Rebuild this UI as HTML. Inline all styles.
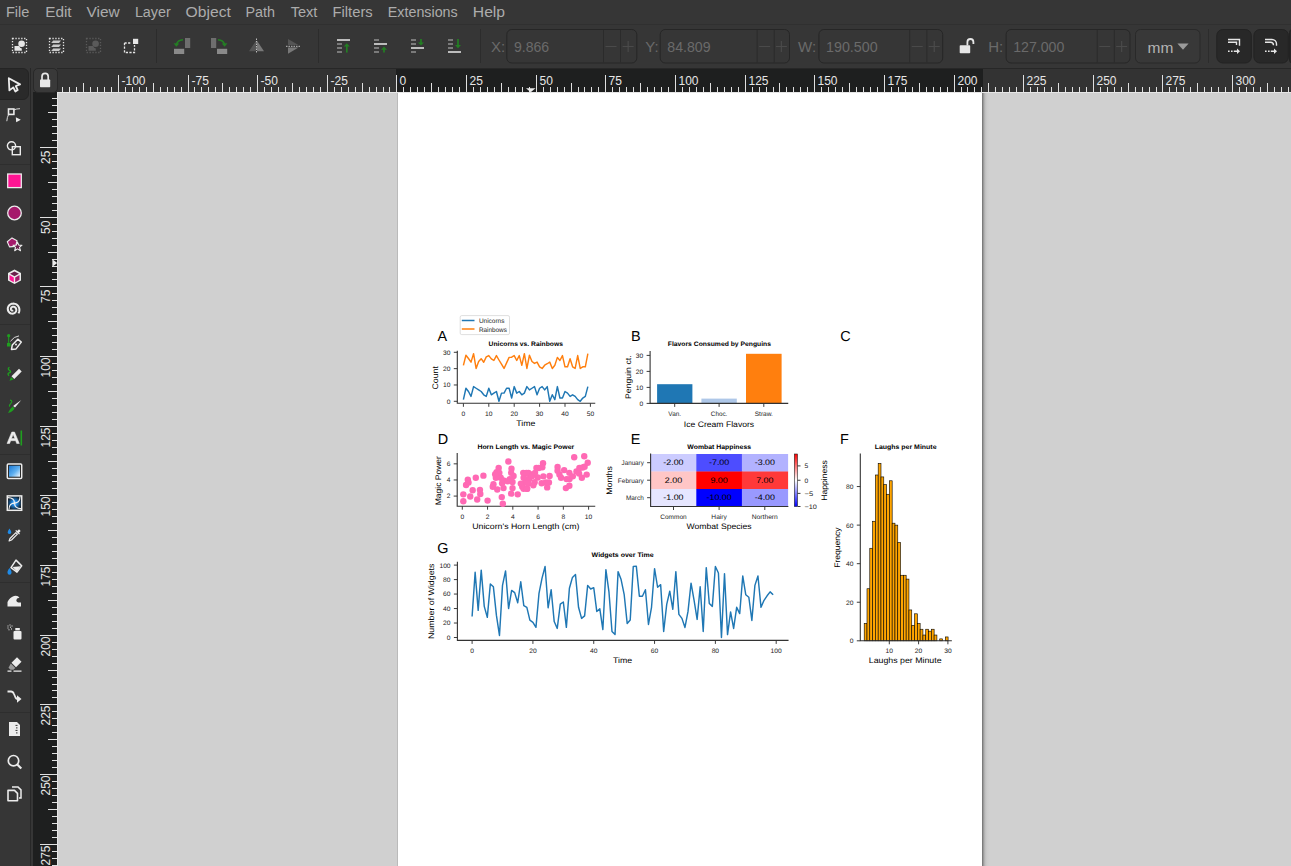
<!DOCTYPE html><html><head><meta charset="utf-8"><style>
*{margin:0;padding:0;box-sizing:border-box}
html,body{width:1291px;height:866px;overflow:hidden;background:#363636;font-family:"Liberation Sans",sans-serif;position:relative}
.a{position:absolute}
.menu{position:absolute;top:0;left:0;width:1291px;height:25px;background:#363636;border-bottom:1px solid #303030}
.mi{position:absolute;top:3px;font-size:15px;color:#bdbdbd;line-height:18px}
.tb{position:absolute;top:25px;left:0;width:1291px;height:43px;background:#363636}
.fld{position:absolute;top:29px;height:34px;border:1px solid #252525;border-radius:5px}
.fl{position:absolute;top:38px;font-size:15px;color:#6b6b6b;line-height:18px}
.sep{position:absolute;width:1px;background:#2e2e2e}
</style></head><body>
<div class="menu"></div>
<svg class="a" style="left:0;top:0" width="1291" height="24"><text x="5.9" y="16.9" font-family="Liberation Sans" font-size="15.3" fill="#acacac" textLength="23.5" lengthAdjust="spacingAndGlyphs">File</text><text x="45.2" y="16.9" font-family="Liberation Sans" font-size="15.3" fill="#acacac" textLength="26.4" lengthAdjust="spacingAndGlyphs">Edit</text><text x="86.5" y="16.9" font-family="Liberation Sans" font-size="15.3" fill="#acacac" textLength="33.2" lengthAdjust="spacingAndGlyphs">View</text><text x="134.9" y="16.9" font-family="Liberation Sans" font-size="15.3" fill="#acacac" textLength="35.9" lengthAdjust="spacingAndGlyphs">Layer</text><text x="185.6" y="16.9" font-family="Liberation Sans" font-size="15.3" fill="#acacac" textLength="45.3" lengthAdjust="spacingAndGlyphs">Object</text><text x="245.5" y="16.9" font-family="Liberation Sans" font-size="15.3" fill="#acacac" textLength="29.5" lengthAdjust="spacingAndGlyphs">Path</text><text x="290.7" y="16.9" font-family="Liberation Sans" font-size="15.3" fill="#acacac" textLength="26.7" lengthAdjust="spacingAndGlyphs">Text</text><text x="332.5" y="16.9" font-family="Liberation Sans" font-size="15.3" fill="#acacac" textLength="40.2" lengthAdjust="spacingAndGlyphs">Filters</text><text x="387.8" y="16.9" font-family="Liberation Sans" font-size="15.3" fill="#acacac" textLength="69.9" lengthAdjust="spacingAndGlyphs">Extensions</text><text x="472.8" y="16.9" font-family="Liberation Sans" font-size="15.3" fill="#acacac" textLength="32.3" lengthAdjust="spacingAndGlyphs">Help</text></svg>
<div class="tb"></div>
<svg class="a" style="left:0;top:0" width="1291" height="68"><rect x="12.5" y="38.5" width="14" height="14" fill="none" stroke="#e6e6e6" stroke-width="1.3" stroke-dasharray="1.3 1.6"/><circle cx="21.6" cy="43.8" r="3.3" fill="#e6e6e6"/><path d="M14.5 46H19.2A3.6 3.6 0 0 0 21.8 48.5V50.8H14.5Z" fill="#e6e6e6"/><rect x="49.5" y="38.5" width="14" height="14" fill="none" stroke="#e6e6e6" stroke-width="1.3" stroke-dasharray="1.3 1.6"/><path d="M53.2 40.6H61L59 43.0H51.2Z" fill="#c8c8c8"/><path d="M53.2 44.6H61L59 47.0H51.2Z" fill="#c8c8c8"/><path d="M53.2 48.6H61L59 51.0H51.2Z" fill="#c8c8c8"/><rect x="86.5" y="38.5" width="14" height="14" fill="none" stroke="#5a5a5a" stroke-width="1.3" stroke-dasharray="1.3 1.6"/><circle cx="95.6" cy="43.8" r="3.3" fill="#5a5a5a"/><path d="M88.5 46H93.2A3.6 3.6 0 0 0 95.8 48.5V50.8H88.5Z" fill="#5a5a5a"/><path d="M124.5 43V52.5H134.5V45" fill="none" stroke="#e6e6e6" stroke-width="1.3" stroke-dasharray="2.2 1.4"/><path d="M124.5 43H131" fill="none" stroke="#e6e6e6" stroke-width="1.3" stroke-dasharray="2.2 1.4"/><rect x="133" y="38.8" width="5.2" height="5.2" fill="#e6e6e6"/><path d="M156.5 29V63" stroke="#2c2c2c" stroke-width="1"/><path d="M318.5 29V63" stroke="#2c2c2c" stroke-width="1"/><path d="M480.5 29V63" stroke="#2c2c2c" stroke-width="1"/><path d="M1208.5 29V63" stroke="#2c2c2c" stroke-width="1"/><rect x="185" y="38" width="5.2" height="10" fill="#6e6e6e"/><rect x="174" y="48.8" width="10.2" height="5.2" fill="#8a8a8a"/><path d="M183 39.7C179 40 177 42 176.5 44.5" fill="none" stroke="#237f23" stroke-width="1.6"/><path d="M173.6 43.2L176.3 46.8L179.3 43.5Z" fill="#237f23"/><rect x="211" y="38" width="5.2" height="10" fill="#6e6e6e"/><rect x="217" y="48.8" width="10.2" height="5.2" fill="#8a8a8a"/><path d="M218 39.7C222 40 224 42 224.5 44.5" fill="none" stroke="#237f23" stroke-width="1.6"/><path d="M227.4 43.2L224.7 46.8L221.7 43.5Z" fill="#237f23"/><path d="M256 40.8V51.3H249Z" fill="#555"/><path d="M257 40.8V51.3H264Z" fill="#787878"/><path d="M256.5 38.5V53.2" stroke="#bdbdbd" stroke-width="1" stroke-dasharray="1.5 1"/><path d="M288 39V45L298.5 45Z" fill="#555"/><path d="M288 53.8V47.6L298.5 47.6Z" fill="#787878"/><path d="M286 46.3H300.5" stroke="#bdbdbd" stroke-width="1" stroke-dasharray="1.5 1"/><rect x="337" y="39" width="13" height="2" fill="#bcbcbc"/><rect x="337" y="43" width="5" height="2" fill="#7a7a7a"/><rect x="337" y="47" width="5" height="2" fill="#7a7a7a"/><rect x="337" y="51" width="5" height="2" fill="#7a7a7a"/><path d="M346.8 52.6V45.7" stroke="#237f23" stroke-width="1.7"/><path d="M343.8 46.400000000000006L346.8 43.2L349.8 46.400000000000006Z" fill="#237f23"/><rect x="374" y="39" width="5" height="2" fill="#7a7a7a"/><rect x="374" y="43" width="13" height="2" fill="#bcbcbc"/><rect x="374" y="47" width="5" height="2" fill="#7a7a7a"/><rect x="374" y="51" width="5" height="2" fill="#7a7a7a"/><path d="M384 52.6V49.0" stroke="#237f23" stroke-width="1.7"/><path d="M381 49.7L384 46.5L387 49.7Z" fill="#237f23"/><rect x="411" y="39" width="5" height="2" fill="#7a7a7a"/><rect x="411" y="43" width="5" height="2" fill="#7a7a7a"/><rect x="411" y="47" width="13" height="2" fill="#bcbcbc"/><rect x="411" y="51" width="5" height="2" fill="#7a7a7a"/><path d="M421 39V43.1" stroke="#237f23" stroke-width="1.7"/><path d="M418 42.4L421 45.6L424 42.4Z" fill="#237f23"/><rect x="448" y="39" width="5" height="2" fill="#7a7a7a"/><rect x="448" y="43" width="5" height="2" fill="#7a7a7a"/><rect x="448" y="47" width="5" height="2" fill="#7a7a7a"/><rect x="448" y="51" width="13" height="2" fill="#bcbcbc"/><path d="M458 39V45.7" stroke="#237f23" stroke-width="1.7"/><path d="M455 45.0L458 48.2L461 45.0Z" fill="#237f23"/><rect x="506.8" y="29.5" width="129.99999999999994" height="33.5" rx="5" fill="#363636" stroke="#262626" stroke-width="1"/><path d="M603.5 30V62.5M620.5 30V62.5" stroke="#2b2b2b" stroke-width="1"/><path d="M605.5 46.5H616.5M622.65 46.5H633.65M628.15 41V52" stroke="#4a4a4a" stroke-width="1.2"/><text x="491" y="52" font-family="Liberation Sans" font-size="15" fill="#6a6a6a">X:</text><text x="513.9" y="52" font-family="Liberation Sans" font-size="15" fill="#6a6a6a" textLength="35.300000000000004" lengthAdjust="spacingAndGlyphs">9.866</text><rect x="660.2" y="29.5" width="129.29999999999995" height="33.5" rx="5" fill="#363636" stroke="#262626" stroke-width="1"/><path d="M757.1 30V62.5M774.2 30V62.5" stroke="#2b2b2b" stroke-width="1"/><path d="M759.1500000000001 46.5H770.1500000000001M775.85 46.5H786.85M781.35 41V52" stroke="#4a4a4a" stroke-width="1.2"/><text x="645.3" y="52" font-family="Liberation Sans" font-size="15" fill="#6a6a6a">Y:</text><text x="667.3000000000001" y="52" font-family="Liberation Sans" font-size="15" fill="#6a6a6a" textLength="43.300000000000004" lengthAdjust="spacingAndGlyphs">84.809</text><rect x="818.9" y="29.5" width="123.80000000000007" height="33.5" rx="5" fill="#363636" stroke="#262626" stroke-width="1"/><path d="M909.7 30V62.5M926.8 30V62.5" stroke="#2b2b2b" stroke-width="1"/><path d="M911.75 46.5H922.75M928.75 46.5H939.75M934.25 41V52" stroke="#4a4a4a" stroke-width="1.2"/><text x="798" y="52" font-family="Liberation Sans" font-size="15" fill="#6a6a6a">W:</text><text x="826.0" y="52" font-family="Liberation Sans" font-size="15" fill="#6a6a6a" textLength="51.7" lengthAdjust="spacingAndGlyphs">190.500</text><rect x="1006.1" y="29.5" width="123.89999999999998" height="33.5" rx="5" fill="#363636" stroke="#262626" stroke-width="1"/><path d="M1097.2 30V62.5M1114.3 30V62.5" stroke="#2b2b2b" stroke-width="1"/><path d="M1099.25 46.5H1110.25M1116.15 46.5H1127.15M1121.65 41V52" stroke="#4a4a4a" stroke-width="1.2"/><text x="988.2" y="52" font-family="Liberation Sans" font-size="15" fill="#6a6a6a">H:</text><text x="1013.2" y="52" font-family="Liberation Sans" font-size="15" fill="#6a6a6a" textLength="51.2" lengthAdjust="spacingAndGlyphs">127.000</text><rect x="959.7" y="45.3" width="10.5" height="8" rx="0.8" fill="#e6e6e6"/><path d="M967.4 45.5V42A3 3 0 0 1 973.4 42V44" fill="none" stroke="#e6e6e6" stroke-width="1.8"/><rect x="1135.5" y="29.5" width="64.5" height="33.5" rx="5" fill="#383838" stroke="#292929" stroke-width="1"/><text x="1147.5" y="52.8" font-family="Liberation Sans" font-size="15.5" fill="#b4b4b4">mm</text><path d="M1177.4 43.5H1188.6L1183 49.7Z" fill="#9a9a9a"/><rect x="1216.8" y="29.5" width="34.5" height="33.5" rx="6" fill="#282828" stroke="#222" stroke-width="1"/><rect x="1253.9" y="29.5" width="34.5" height="33.5" rx="6" fill="#282828" stroke="#222" stroke-width="1"/><path d="M1228 39.5H1239.5V45.8M1228 42.3H1236.5V45" fill="none" stroke="#e6e6e6" stroke-width="1.4"/><path d="M1228 51.2H1229.6M1231 51.2H1232.6M1233.8 51.2H1237.5" stroke="#e6e6e6" stroke-width="1.6"/><path d="M1237 48.4L1240 51.2L1237 54Z" fill="#e6e6e6"/><path d="M1265 39.5H1272A4.5 4.5 0 0 1 1276.5 44V45.8M1265 42.3H1270.5A3 3 0 0 1 1273.5 45.3" fill="none" stroke="#e6e6e6" stroke-width="1.4"/><path d="M1265 51.2H1266.6M1268 51.2H1269.6M1270.8 51.2H1274.5" stroke="#e6e6e6" stroke-width="1.6"/><path d="M1274 48.4L1277 51.2L1274 54Z" fill="#e6e6e6"/><rect x="1289.5" y="29.5" width="6" height="33.5" rx="3" fill="#282828" stroke="#222"/></svg>
<div class="a" style="left:58px;top:93px;width:1233px;height:773px;background:#d0d0d0"></div>
<div class="a" style="left:398px;top:93px;width:584px;height:773px;background:#fff"></div>
<div class="a" style="left:397px;top:93px;width:1px;height:773px;background:#bababa"></div>
<div class="a" style="left:982px;top:93px;width:8px;height:773px;background:linear-gradient(90deg,#6c6c6c 0px,#9a9a9a 1.5px,#bdbdbd 3px,#cbcbcb 5px,#d0d0d0 8px)"></div>
<svg class="a" style="left:0;top:0" width="1291" height="866"><text x="442.3" y="337.3" font-family="Liberation Sans" text-rendering="geometricPrecision" font-size="14.42" text-anchor="middle" dominant-baseline="central" fill="#000">A</text><rect x="460.2" y="315.6" width="49.3" height="19" rx="1.5" fill="#fff" stroke="#d6d6d6" stroke-width="0.8"/><path d="M461.8 320.5H474.5" stroke="#1f77b4" stroke-width="1.5"/><path d="M461.8 329H474.5" stroke="#ff7f0e" stroke-width="1.5"/><text x="478.9" y="321.5" font-family="Liberation Sans" text-rendering="geometricPrecision" font-size="6.45" text-anchor="start" dominant-baseline="central" fill="#222" textLength="25.51" lengthAdjust="spacingAndGlyphs">Unicorns</text><text x="478.9" y="330" font-family="Liberation Sans" text-rendering="geometricPrecision" font-size="6.45" text-anchor="start" dominant-baseline="central" fill="#222" textLength="28.03" lengthAdjust="spacingAndGlyphs">Rainbows</text><text x="525.8" y="344.4" font-family="Liberation Sans" text-rendering="geometricPrecision" font-size="6.45" text-anchor="middle" dominant-baseline="central" font-weight="bold" fill="#000" textLength="74.37" lengthAdjust="spacingAndGlyphs">Unicorns vs. Rainbows</text><path d="M457.3 351.2V403.3H594.7" fill="none" stroke="#333" stroke-width="1.1" stroke-linecap="square"/><path d="M453.8 401.3H457.3 M453.8 384.97H457.3 M453.8 368.64H457.3 M453.8 352.31H457.3" stroke="#333" stroke-width="0.95"/><text x="450.5" y="402.2" font-family="Liberation Sans" text-rendering="geometricPrecision" font-size="6.45" text-anchor="end" dominant-baseline="central" fill="#222" textLength="3.73" lengthAdjust="spacingAndGlyphs">0</text><text x="450.5" y="385.87" font-family="Liberation Sans" text-rendering="geometricPrecision" font-size="6.45" text-anchor="end" dominant-baseline="central" fill="#222" textLength="7.46" lengthAdjust="spacingAndGlyphs">10</text><text x="450.5" y="369.54" font-family="Liberation Sans" text-rendering="geometricPrecision" font-size="6.45" text-anchor="end" dominant-baseline="central" fill="#222" textLength="7.46" lengthAdjust="spacingAndGlyphs">20</text><text x="450.5" y="353.21" font-family="Liberation Sans" text-rendering="geometricPrecision" font-size="6.45" text-anchor="end" dominant-baseline="central" fill="#222" textLength="7.46" lengthAdjust="spacingAndGlyphs">30</text><path d="M463.4 403.3V406.8 M488.8 403.3V406.8 M514.2 403.3V406.8 M539.6 403.3V406.8 M565 403.3V406.8 M590.4 403.3V406.8" stroke="#333" stroke-width="0.95"/><text x="463.4" y="414.6" font-family="Liberation Sans" text-rendering="geometricPrecision" font-size="6.45" text-anchor="middle" dominant-baseline="central" fill="#222" textLength="3.73" lengthAdjust="spacingAndGlyphs">0</text><text x="488.8" y="414.6" font-family="Liberation Sans" text-rendering="geometricPrecision" font-size="6.45" text-anchor="middle" dominant-baseline="central" fill="#222" textLength="7.46" lengthAdjust="spacingAndGlyphs">10</text><text x="514.2" y="414.6" font-family="Liberation Sans" text-rendering="geometricPrecision" font-size="6.45" text-anchor="middle" dominant-baseline="central" fill="#222" textLength="7.46" lengthAdjust="spacingAndGlyphs">20</text><text x="539.6" y="414.6" font-family="Liberation Sans" text-rendering="geometricPrecision" font-size="6.45" text-anchor="middle" dominant-baseline="central" fill="#222" textLength="7.46" lengthAdjust="spacingAndGlyphs">30</text><text x="565" y="414.6" font-family="Liberation Sans" text-rendering="geometricPrecision" font-size="6.45" text-anchor="middle" dominant-baseline="central" fill="#222" textLength="7.46" lengthAdjust="spacingAndGlyphs">40</text><text x="590.4" y="414.6" font-family="Liberation Sans" text-rendering="geometricPrecision" font-size="6.45" text-anchor="middle" dominant-baseline="central" fill="#222" textLength="7.46" lengthAdjust="spacingAndGlyphs">50</text><text x="525.8" y="423.9" font-family="Liberation Sans" text-rendering="geometricPrecision" font-size="8.05" text-anchor="middle" dominant-baseline="central" fill="#000" textLength="19.14" lengthAdjust="spacingAndGlyphs">Time</text><text x="435.1" y="377.8" font-family="Liberation Sans" text-rendering="geometricPrecision" font-size="8.05" text-anchor="middle" dominant-baseline="central" fill="#000" transform="rotate(-90 435.1 377.8)" textLength="23.22" lengthAdjust="spacingAndGlyphs">Count</text><polyline points="463.4,399.67 465.94,388.24 468.48,391.5 471.02,396.4 473.56,386.6 476.1,388.24 478.64,389.87 481.18,391.5 483.72,394.77 486.26,396.4 488.8,388.24 491.34,394.77 493.88,393.13 496.42,391.5 498.96,401.3 501.5,393.13 504.04,393.13 506.58,388.24 509.12,388.24 511.66,398.03 514.2,386.6 516.74,393.13 519.28,391.5 521.82,394.77 524.36,393.13 526.9,386.6 529.44,389.87 531.98,388.24 534.52,386.6 537.06,394.77 539.6,388.24 542.14,386.6 544.68,389.87 547.22,386.6 549.76,401.3 552.3,394.77 554.84,399.67 557.38,386.6 559.92,398.03 562.46,398.03 565,391.5 567.54,393.13 570.08,396.4 572.62,394.77 575.16,396.4 577.7,399.67 580.24,401.3 582.78,398.03 585.32,396.4 587.86,386.6" fill="none" stroke="#1f77b4" stroke-width="1.45" stroke-linejoin="round"/><polyline points="463.4,365.37 465.94,355.25 468.48,358.52 471.02,362.11 473.56,353.62 476.1,368.48 478.64,361.45 481.18,358.68 483.72,362.27 486.26,356.88 488.8,355.58 491.34,358.84 493.88,360.48 496.42,355.58 498.96,359.99 501.5,364.23 504.04,368.48 506.58,362.92 509.12,357.37 511.66,357.21 514.2,355.58 516.74,360.48 519.28,355.58 521.82,365.37 524.36,353.62 526.9,368.48 529.44,355.25 531.98,361.45 534.52,363.41 537.06,362.11 539.6,366.84 542.14,368.48 544.68,365.21 547.22,363.74 549.76,362.11 552.3,368.48 554.84,365.21 557.38,357.37 559.92,360.48 562.46,355.58 565,366.84 567.54,366.84 570.08,358.68 572.62,366.84 575.16,368.48 577.7,355.58 580.24,368.48 582.78,366.84 585.32,366.84 587.86,353.62" fill="none" stroke="#ff7f0e" stroke-width="1.45" stroke-linejoin="round"/><text x="635.7" y="337" font-family="Liberation Sans" text-rendering="geometricPrecision" font-size="14.42" text-anchor="middle" dominant-baseline="central" fill="#000">B</text><text x="845.4" y="337" font-family="Liberation Sans" text-rendering="geometricPrecision" font-size="14.42" text-anchor="middle" dominant-baseline="central" fill="#000">C</text><text x="719.4" y="344.5" font-family="Liberation Sans" text-rendering="geometricPrecision" font-size="6.45" text-anchor="middle" dominant-baseline="central" font-weight="bold" fill="#000" textLength="103.24" lengthAdjust="spacingAndGlyphs">Flavors Consumed by Penguins</text><rect x="657.1" y="384.2" width="35.3" height="19.2" fill="#1f77b4"/><rect x="701.4" y="398.6" width="35.4" height="4.8" fill="#aec7e8"/><rect x="746" y="353.8" width="35.6" height="49.6" fill="#ff7f0e"/><path d="M650.1 351.6V403.4H787.7" fill="none" stroke="#333" stroke-width="1.1" stroke-linecap="square"/><path d="M646.6 403.4H650.1 M646.6 387.4H650.1 M646.6 371.4H650.1 M646.6 355.4H650.1" stroke="#333" stroke-width="0.95"/><text x="643.3" y="404.3" font-family="Liberation Sans" text-rendering="geometricPrecision" font-size="6.45" text-anchor="end" dominant-baseline="central" fill="#222" textLength="3.73" lengthAdjust="spacingAndGlyphs">0</text><text x="643.3" y="388.3" font-family="Liberation Sans" text-rendering="geometricPrecision" font-size="6.45" text-anchor="end" dominant-baseline="central" fill="#222" textLength="7.46" lengthAdjust="spacingAndGlyphs">10</text><text x="643.3" y="372.3" font-family="Liberation Sans" text-rendering="geometricPrecision" font-size="6.45" text-anchor="end" dominant-baseline="central" fill="#222" textLength="7.46" lengthAdjust="spacingAndGlyphs">20</text><text x="643.3" y="356.3" font-family="Liberation Sans" text-rendering="geometricPrecision" font-size="6.45" text-anchor="end" dominant-baseline="central" fill="#222" textLength="7.46" lengthAdjust="spacingAndGlyphs">30</text><path d="M674.7 403.4V406.9 M719.1 403.4V406.9 M763.8 403.4V406.9" stroke="#333" stroke-width="0.95"/><text x="674.7" y="414.9" font-family="Liberation Sans" text-rendering="geometricPrecision" font-size="6.45" text-anchor="middle" dominant-baseline="central" fill="#222" textLength="12.72" lengthAdjust="spacingAndGlyphs">Van.</text><text x="719.1" y="414.9" font-family="Liberation Sans" text-rendering="geometricPrecision" font-size="6.45" text-anchor="middle" dominant-baseline="central" fill="#222" textLength="16.48" lengthAdjust="spacingAndGlyphs">Choc.</text><text x="763.8" y="414.9" font-family="Liberation Sans" text-rendering="geometricPrecision" font-size="6.45" text-anchor="middle" dominant-baseline="central" fill="#222" textLength="18.14" lengthAdjust="spacingAndGlyphs">Straw.</text><text x="719" y="424.1" font-family="Liberation Sans" text-rendering="geometricPrecision" font-size="8.05" text-anchor="middle" dominant-baseline="central" fill="#000" textLength="70.28" lengthAdjust="spacingAndGlyphs">Ice Cream Flavors</text><text x="628.7" y="377.2" font-family="Liberation Sans" text-rendering="geometricPrecision" font-size="8.05" text-anchor="middle" dominant-baseline="central" fill="#000" transform="rotate(-90 628.7 377.2)" textLength="43.59" lengthAdjust="spacingAndGlyphs">Penguin ct.</text><text x="442.9" y="440.1" font-family="Liberation Sans" text-rendering="geometricPrecision" font-size="14.42" text-anchor="middle" dominant-baseline="central" fill="#000">D</text><text x="525.8" y="447.2" font-family="Liberation Sans" text-rendering="geometricPrecision" font-size="6.45" text-anchor="middle" dominant-baseline="central" font-weight="bold" fill="#000" textLength="96.80" lengthAdjust="spacingAndGlyphs">Horn Length vs. Magic Power</text><path d="M457.2 453.6V506.2H594.7" fill="none" stroke="#333" stroke-width="1.1" stroke-linecap="square"/><path d="M453.7 496.08H457.2 M453.7 479.96H457.2 M453.7 463.84H457.2" stroke="#333" stroke-width="0.95"/><text x="450.4" y="496.98" font-family="Liberation Sans" text-rendering="geometricPrecision" font-size="6.45" text-anchor="end" dominant-baseline="central" fill="#222" textLength="3.73" lengthAdjust="spacingAndGlyphs">2</text><text x="450.4" y="480.86" font-family="Liberation Sans" text-rendering="geometricPrecision" font-size="6.45" text-anchor="end" dominant-baseline="central" fill="#222" textLength="3.73" lengthAdjust="spacingAndGlyphs">4</text><text x="450.4" y="464.74" font-family="Liberation Sans" text-rendering="geometricPrecision" font-size="6.45" text-anchor="end" dominant-baseline="central" fill="#222" textLength="3.73" lengthAdjust="spacingAndGlyphs">6</text><path d="M462.3 506.2V509.7 M487.56 506.2V509.7 M512.82 506.2V509.7 M538.08 506.2V509.7 M563.34 506.2V509.7 M588.6 506.2V509.7" stroke="#333" stroke-width="0.95"/><text x="462.3" y="517.1" font-family="Liberation Sans" text-rendering="geometricPrecision" font-size="6.45" text-anchor="middle" dominant-baseline="central" fill="#222" textLength="3.73" lengthAdjust="spacingAndGlyphs">0</text><text x="487.56" y="517.1" font-family="Liberation Sans" text-rendering="geometricPrecision" font-size="6.45" text-anchor="middle" dominant-baseline="central" fill="#222" textLength="3.73" lengthAdjust="spacingAndGlyphs">2</text><text x="512.82" y="517.1" font-family="Liberation Sans" text-rendering="geometricPrecision" font-size="6.45" text-anchor="middle" dominant-baseline="central" fill="#222" textLength="3.73" lengthAdjust="spacingAndGlyphs">4</text><text x="538.08" y="517.1" font-family="Liberation Sans" text-rendering="geometricPrecision" font-size="6.45" text-anchor="middle" dominant-baseline="central" fill="#222" textLength="3.73" lengthAdjust="spacingAndGlyphs">6</text><text x="563.34" y="517.1" font-family="Liberation Sans" text-rendering="geometricPrecision" font-size="6.45" text-anchor="middle" dominant-baseline="central" fill="#222" textLength="3.73" lengthAdjust="spacingAndGlyphs">8</text><text x="588.6" y="517.1" font-family="Liberation Sans" text-rendering="geometricPrecision" font-size="6.45" text-anchor="middle" dominant-baseline="central" fill="#222" textLength="7.46" lengthAdjust="spacingAndGlyphs">10</text><text x="525.8" y="526" font-family="Liberation Sans" text-rendering="geometricPrecision" font-size="8.05" text-anchor="middle" dominant-baseline="central" fill="#000" textLength="107.35" lengthAdjust="spacingAndGlyphs">Unicorn's Horn Length (cm)</text><text x="438.7" y="480.7" font-family="Liberation Sans" text-rendering="geometricPrecision" font-size="8.05" text-anchor="middle" dominant-baseline="central" fill="#000" transform="rotate(-90 438.7 480.7)" textLength="49.11" lengthAdjust="spacingAndGlyphs">Magic Power</text><g fill="#ff69b4"><circle cx="528.44" cy="479.12" r="3.2"/><circle cx="531.54" cy="474.48" r="3.2"/><circle cx="534.64" cy="482.22" r="3.2"/><circle cx="537.74" cy="477.57" r="3.2"/><circle cx="525.34" cy="482.22" r="3.2"/><circle cx="522.25" cy="486.87" r="3.2"/><circle cx="528.44" cy="472.93" r="3.2"/><circle cx="559.43" cy="474.48" r="3.2"/><circle cx="569.5" cy="479.12" r="3.2"/><circle cx="576.47" cy="471.38" r="3.2"/><circle cx="582.66" cy="467.5" r="3.2"/><circle cx="463.32" cy="494.35" r="3.2"/><circle cx="463.32" cy="501.28" r="3.2"/><circle cx="466.09" cy="485" r="3.2"/><circle cx="467.82" cy="479.8" r="3.2"/><circle cx="468.51" cy="482.57" r="3.2"/><circle cx="470.25" cy="496.43" r="3.2"/><circle cx="472.67" cy="490.19" r="3.2"/><circle cx="475.79" cy="477.72" r="3.2"/><circle cx="477.18" cy="499.55" r="3.2"/><circle cx="479.95" cy="489.85" r="3.2"/><circle cx="480.29" cy="494.01" r="3.2"/><circle cx="483.41" cy="475.64" r="3.2"/><circle cx="487.57" cy="500.59" r="3.2"/><circle cx="493.46" cy="484.3" r="3.2"/><circle cx="492.77" cy="486.73" r="3.2"/><circle cx="497.27" cy="489.5" r="3.2"/><circle cx="496.58" cy="472.18" r="3.2"/><circle cx="498.66" cy="468.02" r="3.2"/><circle cx="497.97" cy="476.33" r="3.2"/><circle cx="500.74" cy="477.72" r="3.2"/><circle cx="502.12" cy="483.26" r="3.2"/><circle cx="503.51" cy="488.12" r="3.2"/><circle cx="501.78" cy="497.12" r="3.2"/><circle cx="502.82" cy="503.71" r="3.2"/><circle cx="508.36" cy="461.43" r="3.2"/><circle cx="511.48" cy="468.71" r="3.2"/><circle cx="511.13" cy="472.87" r="3.2"/><circle cx="513.56" cy="475.99" r="3.2"/><circle cx="512.52" cy="481.88" r="3.2"/><circle cx="512.52" cy="488.12" r="3.2"/><circle cx="511.13" cy="493.66" r="3.2"/><circle cx="517.72" cy="494.35" r="3.2"/><circle cx="523.26" cy="472.87" r="3.2"/><circle cx="527.07" cy="473.56" r="3.2"/><circle cx="523.61" cy="477.72" r="3.2"/><circle cx="520.84" cy="483.61" r="3.2"/><circle cx="523.61" cy="488.81" r="3.2"/><circle cx="527.07" cy="488.81" r="3.2"/><circle cx="528.46" cy="483.26" r="3.2"/><circle cx="495.89" cy="477.72" r="3.2"/><circle cx="499.35" cy="472.87" r="3.2"/><circle cx="503.51" cy="480.49" r="3.2"/><circle cx="509.75" cy="479.11" r="3.2"/><circle cx="507.67" cy="481.19" r="3.2"/><circle cx="495.19" cy="474.26" r="3.2"/><circle cx="526.39" cy="472.87" r="3.2"/><circle cx="527.08" cy="488.81" r="3.2"/><circle cx="533.32" cy="485.34" r="3.2"/><circle cx="535.05" cy="472.87" r="3.2"/><circle cx="536.43" cy="468.02" r="3.2"/><circle cx="543.02" cy="463.17" r="3.2"/><circle cx="542.33" cy="467.33" r="3.2"/><circle cx="543.36" cy="476.33" r="3.2"/><circle cx="549.6" cy="475.99" r="3.2"/><circle cx="548.91" cy="482.57" r="3.2"/><circle cx="547.18" cy="487.42" r="3.2"/><circle cx="541.63" cy="483.26" r="3.2"/><circle cx="557.57" cy="466.98" r="3.2"/><circle cx="557.57" cy="470.79" r="3.2"/><circle cx="564.15" cy="470.1" r="3.2"/><circle cx="569.35" cy="472.87" r="3.2"/><circle cx="572.82" cy="476.33" r="3.2"/><circle cx="561.04" cy="477.72" r="3.2"/><circle cx="566.58" cy="479.11" r="3.2"/><circle cx="565.89" cy="488.12" r="3.2"/><circle cx="569.35" cy="485.69" r="3.2"/><circle cx="574.2" cy="457.28" r="3.2"/><circle cx="584.25" cy="456.24" r="3.2"/><circle cx="587.72" cy="462.82" r="3.2"/><circle cx="584.6" cy="466.63" r="3.2"/><circle cx="579.4" cy="468.02" r="3.2"/><circle cx="579.05" cy="473.56" r="3.2"/><circle cx="581.83" cy="477.72" r="3.2"/><circle cx="586.68" cy="474.6" r="3.2"/><circle cx="529.16" cy="479.11" r="3.2"/><circle cx="531.93" cy="476.33" r="3.2"/><circle cx="527.77" cy="483.26" r="3.2"/><circle cx="538.86" cy="468.02" r="3.2"/><circle cx="545.79" cy="482.57" r="3.2"/></g><text x="635.5" y="440.2" font-family="Liberation Sans" text-rendering="geometricPrecision" font-size="14.42" text-anchor="middle" dominant-baseline="central" fill="#000">E</text><text x="719.2" y="447.1" font-family="Liberation Sans" text-rendering="geometricPrecision" font-size="6.45" text-anchor="middle" dominant-baseline="central" font-weight="bold" fill="#000" textLength="63.76" lengthAdjust="spacingAndGlyphs">Wombat Happiness</text><rect x="650.6" y="454" width="46" height="17.8" fill="rgb(204,204,255)"/><text x="673.45" y="462.65" font-family="Liberation Sans" text-rendering="geometricPrecision" font-size="8.05" text-anchor="middle" dominant-baseline="central" fill="#000" textLength="20.23" lengthAdjust="spacingAndGlyphs">-2.00</text><rect x="696.3" y="454" width="45.9" height="17.8" fill="rgb(77,77,255)"/><text x="719.1" y="462.65" font-family="Liberation Sans" text-rendering="geometricPrecision" font-size="8.05" text-anchor="middle" dominant-baseline="central" fill="#000" textLength="20.23" lengthAdjust="spacingAndGlyphs">-7.00</text><rect x="741.9" y="454" width="46.2" height="17.8" fill="rgb(178,178,255)"/><text x="764.85" y="462.65" font-family="Liberation Sans" text-rendering="geometricPrecision" font-size="8.05" text-anchor="middle" dominant-baseline="central" fill="#000" textLength="20.23" lengthAdjust="spacingAndGlyphs">-3.00</text><rect x="650.6" y="471.5" width="46" height="17.8" fill="rgb(255,198,198)"/><text x="673.45" y="480.15" font-family="Liberation Sans" text-rendering="geometricPrecision" font-size="8.05" text-anchor="middle" dominant-baseline="central" fill="#000" textLength="17.41" lengthAdjust="spacingAndGlyphs">2.00</text><rect x="696.3" y="471.5" width="45.9" height="17.8" fill="rgb(255,0,0)"/><text x="719.1" y="480.15" font-family="Liberation Sans" text-rendering="geometricPrecision" font-size="8.05" text-anchor="middle" dominant-baseline="central" fill="#000" textLength="17.41" lengthAdjust="spacingAndGlyphs">9.00</text><rect x="741.9" y="471.5" width="46.2" height="17.8" fill="rgb(255,57,57)"/><text x="764.85" y="480.15" font-family="Liberation Sans" text-rendering="geometricPrecision" font-size="8.05" text-anchor="middle" dominant-baseline="central" fill="#000" textLength="17.41" lengthAdjust="spacingAndGlyphs">7.00</text><rect x="650.6" y="489" width="46" height="17.8" fill="rgb(230,230,255)"/><text x="673.45" y="497.65" font-family="Liberation Sans" text-rendering="geometricPrecision" font-size="8.05" text-anchor="middle" dominant-baseline="central" fill="#000" textLength="20.23" lengthAdjust="spacingAndGlyphs">-1.00</text><rect x="696.3" y="489" width="45.9" height="17.8" fill="rgb(0,0,255)"/><text x="719.1" y="497.65" font-family="Liberation Sans" text-rendering="geometricPrecision" font-size="8.05" text-anchor="middle" dominant-baseline="central" fill="#000" textLength="25.21" lengthAdjust="spacingAndGlyphs">-10.00</text><rect x="741.9" y="489" width="46.2" height="17.8" fill="rgb(153,153,255)"/><text x="764.85" y="497.65" font-family="Liberation Sans" text-rendering="geometricPrecision" font-size="8.05" text-anchor="middle" dominant-baseline="central" fill="#000" textLength="20.23" lengthAdjust="spacingAndGlyphs">-4.00</text><path d="M650.6 454V506.5H787.8" fill="none" stroke="#333" stroke-width="1.1" stroke-linecap="square"/><path d="M647.1 462.7H650.6 M647.1 480.2H650.6 M647.1 497.7H650.6" stroke="#333" stroke-width="0.95"/><text x="643.8" y="463.6" font-family="Liberation Sans" text-rendering="geometricPrecision" font-size="6.45" text-anchor="end" dominant-baseline="central" fill="#222" textLength="22.22" lengthAdjust="spacingAndGlyphs">January</text><text x="643.8" y="481.1" font-family="Liberation Sans" text-rendering="geometricPrecision" font-size="6.45" text-anchor="end" dominant-baseline="central" fill="#222" textLength="25.97" lengthAdjust="spacingAndGlyphs">February</text><text x="643.8" y="498.6" font-family="Liberation Sans" text-rendering="geometricPrecision" font-size="6.45" text-anchor="end" dominant-baseline="central" fill="#222" textLength="17.86" lengthAdjust="spacingAndGlyphs">March</text><path d="M673.5 506.5V510 M719.1 506.5V510 M764.8 506.5V510" stroke="#333" stroke-width="0.95"/><text x="673.5" y="517" font-family="Liberation Sans" text-rendering="geometricPrecision" font-size="6.45" text-anchor="middle" dominant-baseline="central" fill="#222" textLength="26.39" lengthAdjust="spacingAndGlyphs">Common</text><text x="719.1" y="517" font-family="Liberation Sans" text-rendering="geometricPrecision" font-size="6.45" text-anchor="middle" dominant-baseline="central" fill="#222" textLength="15.50" lengthAdjust="spacingAndGlyphs">Hairy</text><text x="764.8" y="517" font-family="Liberation Sans" text-rendering="geometricPrecision" font-size="6.45" text-anchor="middle" dominant-baseline="central" fill="#222" textLength="26.02" lengthAdjust="spacingAndGlyphs">Northern</text><text x="719.1" y="526.4" font-family="Liberation Sans" text-rendering="geometricPrecision" font-size="8.05" text-anchor="middle" dominant-baseline="central" fill="#000" textLength="65.08" lengthAdjust="spacingAndGlyphs">Wombat Species</text><text x="609.7" y="480.4" font-family="Liberation Sans" text-rendering="geometricPrecision" font-size="8.05" text-anchor="middle" dominant-baseline="central" fill="#000" transform="rotate(-90 609.7 480.4)" textLength="28.59" lengthAdjust="spacingAndGlyphs">Months</text><defs><linearGradient id="cb" x1="0" y1="1" x2="0" y2="0"><stop offset="0" stop-color="#0000ff"/><stop offset="0.5" stop-color="#ffffff"/><stop offset="1" stop-color="#ff0000"/></linearGradient></defs><rect x="794.3" y="454" width="3.2" height="52.5" fill="url(#cb)" stroke="#222" stroke-width="0.6"/><text x="804.5" y="466.8" font-family="Liberation Sans" text-rendering="geometricPrecision" font-size="6.45" text-anchor="start" dominant-baseline="central" fill="#222" textLength="3.73" lengthAdjust="spacingAndGlyphs">5</text><text x="804.5" y="481.15" font-family="Liberation Sans" text-rendering="geometricPrecision" font-size="6.45" text-anchor="start" dominant-baseline="central" fill="#222" textLength="3.73" lengthAdjust="spacingAndGlyphs">0</text><text x="804.5" y="494.3" font-family="Liberation Sans" text-rendering="geometricPrecision" font-size="6.45" text-anchor="start" dominant-baseline="central" fill="#222" textLength="8.64" lengthAdjust="spacingAndGlyphs">−5</text><text x="804.5" y="507.4" font-family="Liberation Sans" text-rendering="geometricPrecision" font-size="6.45" text-anchor="start" dominant-baseline="central" fill="#222" textLength="12.37" lengthAdjust="spacingAndGlyphs">−10</text><path d="M797.5 465.9H800.5 M797.5 480.25H800.5 M797.5 493.4H800.5 M797.5 506.5H800.5" stroke="#333" stroke-width="0.95"/><text x="824.4" y="480.4" font-family="Liberation Sans" text-rendering="geometricPrecision" font-size="8.05" text-anchor="middle" dominant-baseline="central" fill="#000" transform="rotate(-90 824.4 480.4)" textLength="40.69" lengthAdjust="spacingAndGlyphs">Happiness</text><text x="844.5" y="440" font-family="Liberation Sans" text-rendering="geometricPrecision" font-size="14.42" text-anchor="middle" dominant-baseline="central" fill="#000">F</text><text x="905.6" y="447.1" font-family="Liberation Sans" text-rendering="geometricPrecision" font-size="6.45" text-anchor="middle" dominant-baseline="central" font-weight="bold" fill="#000" textLength="61.82" lengthAdjust="spacingAndGlyphs">Laughs per Minute</text><g fill="#ffa500" stroke="#000" stroke-width="0.6"><rect x="864.2" y="623.45" width="2.8" height="17.35"/><rect x="867" y="588.74" width="2.8" height="52.06"/><rect x="869.79" y="548.26" width="2.8" height="92.54"/><rect x="872.59" y="521.26" width="2.8" height="119.54"/><rect x="875.39" y="474.99" width="2.8" height="165.81"/><rect x="878.19" y="463.42" width="2.8" height="177.38"/><rect x="880.98" y="476.92" width="2.8" height="163.88"/><rect x="883.78" y="484.63" width="2.8" height="156.17"/><rect x="886.58" y="494.27" width="2.8" height="146.53"/><rect x="889.37" y="480.78" width="2.8" height="160.02"/><rect x="892.17" y="523.19" width="2.8" height="117.61"/><rect x="894.97" y="525.12" width="2.8" height="115.68"/><rect x="897.76" y="542.47" width="2.8" height="98.33"/><rect x="900.56" y="575.25" width="2.8" height="65.55"/><rect x="903.36" y="575.25" width="2.8" height="65.55"/><rect x="906.16" y="579.1" width="2.8" height="61.7"/><rect x="908.95" y="609.95" width="2.8" height="30.85"/><rect x="911.75" y="625.38" width="2.8" height="15.42"/><rect x="914.55" y="613.81" width="2.8" height="26.99"/><rect x="917.34" y="623.45" width="2.8" height="17.35"/><rect x="920.14" y="629.23" width="2.8" height="11.57"/><rect x="922.94" y="635.02" width="2.8" height="5.78"/><rect x="925.73" y="629.23" width="2.8" height="11.57"/><rect x="928.53" y="631.16" width="2.8" height="9.64"/><rect x="931.33" y="629.23" width="2.8" height="11.57"/><rect x="934.12" y="635.02" width="2.8" height="5.78"/><rect x="939.72" y="638.87" width="2.8" height="1.93"/><rect x="945.31" y="636.94" width="2.8" height="3.86"/></g><path d="M860.3 454V640.8H951.3" fill="none" stroke="#333" stroke-width="1.1" stroke-linecap="square"/><path d="M856.8 640.8H860.3 M856.8 602.24H860.3 M856.8 563.68H860.3 M856.8 525.12H860.3 M856.8 486.56H860.3" stroke="#333" stroke-width="0.95"/><text x="853.5" y="641.7" font-family="Liberation Sans" text-rendering="geometricPrecision" font-size="6.45" text-anchor="end" dominant-baseline="central" fill="#222" textLength="3.73" lengthAdjust="spacingAndGlyphs">0</text><text x="853.5" y="603.14" font-family="Liberation Sans" text-rendering="geometricPrecision" font-size="6.45" text-anchor="end" dominant-baseline="central" fill="#222" textLength="7.46" lengthAdjust="spacingAndGlyphs">20</text><text x="853.5" y="564.58" font-family="Liberation Sans" text-rendering="geometricPrecision" font-size="6.45" text-anchor="end" dominant-baseline="central" fill="#222" textLength="7.46" lengthAdjust="spacingAndGlyphs">40</text><text x="853.5" y="526.02" font-family="Liberation Sans" text-rendering="geometricPrecision" font-size="6.45" text-anchor="end" dominant-baseline="central" fill="#222" textLength="7.46" lengthAdjust="spacingAndGlyphs">60</text><text x="853.5" y="487.46" font-family="Liberation Sans" text-rendering="geometricPrecision" font-size="6.45" text-anchor="end" dominant-baseline="central" fill="#222" textLength="7.46" lengthAdjust="spacingAndGlyphs">80</text><path d="M889.3 640.8V644.3 M918.6 640.8V644.3 M947.9 640.8V644.3" stroke="#333" stroke-width="0.95"/><text x="889.3" y="651.8" font-family="Liberation Sans" text-rendering="geometricPrecision" font-size="6.45" text-anchor="middle" dominant-baseline="central" fill="#222" textLength="7.46" lengthAdjust="spacingAndGlyphs">10</text><text x="918.6" y="651.8" font-family="Liberation Sans" text-rendering="geometricPrecision" font-size="6.45" text-anchor="middle" dominant-baseline="central" fill="#222" textLength="7.46" lengthAdjust="spacingAndGlyphs">20</text><text x="947.9" y="651.8" font-family="Liberation Sans" text-rendering="geometricPrecision" font-size="6.45" text-anchor="middle" dominant-baseline="central" fill="#222" textLength="7.46" lengthAdjust="spacingAndGlyphs">30</text><text x="905.2" y="660.9" font-family="Liberation Sans" text-rendering="geometricPrecision" font-size="8.05" text-anchor="middle" dominant-baseline="central" fill="#000" textLength="72.77" lengthAdjust="spacingAndGlyphs">Laughs per Minute</text><text x="837.7" y="547.6" font-family="Liberation Sans" text-rendering="geometricPrecision" font-size="8.05" text-anchor="middle" dominant-baseline="central" fill="#000" transform="rotate(-90 837.7 547.6)" textLength="40.40" lengthAdjust="spacingAndGlyphs">Frequency</text><text x="442.8" y="548.9" font-family="Liberation Sans" text-rendering="geometricPrecision" font-size="14.42" text-anchor="middle" dominant-baseline="central" fill="#000">G</text><text x="622.6" y="555.7" font-family="Liberation Sans" text-rendering="geometricPrecision" font-size="6.45" text-anchor="middle" dominant-baseline="central" font-weight="bold" fill="#000" textLength="62.00" lengthAdjust="spacingAndGlyphs">Widgets over Time</text><path d="M457.4 562.4V640.4H788" fill="none" stroke="#333" stroke-width="1.1" stroke-linecap="square"/><path d="M453.9 637.5H457.4 M453.9 623.02H457.4 M453.9 608.54H457.4 M453.9 594.06H457.4 M453.9 579.58H457.4 M453.9 565.1H457.4" stroke="#333" stroke-width="0.95"/><text x="450.6" y="638.4" font-family="Liberation Sans" text-rendering="geometricPrecision" font-size="6.45" text-anchor="end" dominant-baseline="central" fill="#222" textLength="3.73" lengthAdjust="spacingAndGlyphs">0</text><text x="450.6" y="623.92" font-family="Liberation Sans" text-rendering="geometricPrecision" font-size="6.45" text-anchor="end" dominant-baseline="central" fill="#222" textLength="7.46" lengthAdjust="spacingAndGlyphs">20</text><text x="450.6" y="609.44" font-family="Liberation Sans" text-rendering="geometricPrecision" font-size="6.45" text-anchor="end" dominant-baseline="central" fill="#222" textLength="7.46" lengthAdjust="spacingAndGlyphs">40</text><text x="450.6" y="594.96" font-family="Liberation Sans" text-rendering="geometricPrecision" font-size="6.45" text-anchor="end" dominant-baseline="central" fill="#222" textLength="7.46" lengthAdjust="spacingAndGlyphs">60</text><text x="450.6" y="580.48" font-family="Liberation Sans" text-rendering="geometricPrecision" font-size="6.45" text-anchor="end" dominant-baseline="central" fill="#222" textLength="7.46" lengthAdjust="spacingAndGlyphs">80</text><text x="450.6" y="566" font-family="Liberation Sans" text-rendering="geometricPrecision" font-size="6.45" text-anchor="end" dominant-baseline="central" fill="#222" textLength="11.19" lengthAdjust="spacingAndGlyphs">100</text><path d="M472.1 640.4V643.9 M532.92 640.4V643.9 M593.74 640.4V643.9 M654.56 640.4V643.9 M715.38 640.4V643.9 M776.2 640.4V643.9" stroke="#333" stroke-width="0.95"/><text x="472.1" y="651.5" font-family="Liberation Sans" text-rendering="geometricPrecision" font-size="6.45" text-anchor="middle" dominant-baseline="central" fill="#222" textLength="3.73" lengthAdjust="spacingAndGlyphs">0</text><text x="532.92" y="651.5" font-family="Liberation Sans" text-rendering="geometricPrecision" font-size="6.45" text-anchor="middle" dominant-baseline="central" fill="#222" textLength="7.46" lengthAdjust="spacingAndGlyphs">20</text><text x="593.74" y="651.5" font-family="Liberation Sans" text-rendering="geometricPrecision" font-size="6.45" text-anchor="middle" dominant-baseline="central" fill="#222" textLength="7.46" lengthAdjust="spacingAndGlyphs">40</text><text x="654.56" y="651.5" font-family="Liberation Sans" text-rendering="geometricPrecision" font-size="6.45" text-anchor="middle" dominant-baseline="central" fill="#222" textLength="7.46" lengthAdjust="spacingAndGlyphs">60</text><text x="715.38" y="651.5" font-family="Liberation Sans" text-rendering="geometricPrecision" font-size="6.45" text-anchor="middle" dominant-baseline="central" fill="#222" textLength="7.46" lengthAdjust="spacingAndGlyphs">80</text><text x="776.2" y="651.5" font-family="Liberation Sans" text-rendering="geometricPrecision" font-size="6.45" text-anchor="middle" dominant-baseline="central" fill="#222" textLength="11.19" lengthAdjust="spacingAndGlyphs">100</text><text x="622.5" y="660.6" font-family="Liberation Sans" text-rendering="geometricPrecision" font-size="8.05" text-anchor="middle" dominant-baseline="central" fill="#000" textLength="19.14" lengthAdjust="spacingAndGlyphs">Time</text><text x="431.6" y="601.3" font-family="Liberation Sans" text-rendering="geometricPrecision" font-size="8.05" text-anchor="middle" dominant-baseline="central" fill="#000" transform="rotate(-90 431.6 601.3)" textLength="75.54" lengthAdjust="spacingAndGlyphs">Number of Widgets</text><polyline points="472.1,616.5 475.14,572.34 478.18,610.35 481.22,570.17 484.26,606.37 487.31,617.37 490.35,583.92 493.39,586.82 496.43,615.42 499.47,635.47 502.51,585.37 505.55,570.89 508.59,608.54 511.63,590.44 514.67,592.61 517.72,602.75 520.76,581.75 523.8,605.64 526.84,607.31 529.88,620.12 532.92,622.3 535.96,627.36 539,593.34 542.04,578.13 545.08,566.55 548.12,607.82 551.17,589.72 554.21,621.57 557.25,628.45 560.29,604.2 563.33,602.02 566.37,627.36 569.41,588.27 572.45,577.41 575.49,574.51 578.54,607.31 581.58,618.39 584.62,615.85 587.66,585.37 590.7,588.99 593.74,587.69 596.78,611.44 599.82,608.83 602.86,629.54 605.9,569.66 608.95,591.89 611.99,631.49 615.03,634.46 618.07,571.62 621.11,579.58 624.15,594.28 627.19,623.45 630.23,619.91 633.27,566.55 636.31,566.11 639.36,596.23 642.4,596.23 645.44,589.72 648.48,624.47 651.52,607.31 654.56,568.72 657.6,587.25 660.64,584.65 663.68,631.49 666.72,604.34 669.76,591.16 672.81,609.26 675.85,571.62 678.89,614.33 681.93,618.39 684.97,627.44 688.01,611.44 691.05,583.2 694.09,600.29 697.13,619.4 700.17,586.82 703.22,631.49 706.26,567.63 709.3,603.47 712.34,606.37 715.38,566.55 718.42,573.06 721.46,637.5 724.5,573.79 727.54,634.6 730.59,611.87 733.63,628.45 736.67,607.31 739.71,613.61 742.75,575.96 745.79,594.78 748.83,597.25 751.87,620.41 754.91,585.37 757.95,575.96 761,607.31 764.04,600.29 767.08,595.8 770.12,591.89 773.16,594.78" fill="none" stroke="#1f77b4" stroke-width="1.45" stroke-linejoin="round"/></svg>
<div class="a" style="left:57px;top:68px;width:1234px;height:24px;background:#333333"></div>
<div class="a" style="left:396px;top:68px;width:587px;height:24px;background:#1e1f1f"></div>
<div class="a" style="left:57px;top:92px;width:1234px;height:1px;background:#e6e6e6"></div>
<div class="a" style="left:57px;top:68px;width:1234px;height:1px;background:#272727"></div>
<div class="a" style="left:33px;top:92px;width:24px;height:774px;background:#1e1f1f"></div>
<div class="a" style="left:57px;top:92px;width:1px;height:774px;background:#e6e6e6"></div>
<svg class="a" style="left:0;top:68px" width="1291" height="25"><path d="M62.5 19V24 M69.5 19V24 M76.5 19V24 M83.5 15V24 M90.5 19V24 M97.5 19V24 M104.5 19V24 M111.5 19V24 M118.5 7V24 M125.5 19V24 M132.5 19V24 M139.5 19V24 M146.5 19V24 M153.5 15V24 M160.5 19V24 M167.5 19V24 M174.5 19V24 M181.5 19V24 M188.5 7V24 M194.5 19V24 M201.5 19V24 M208.5 19V24 M215.5 19V24 M222.5 15V24 M229.5 19V24 M236.5 19V24 M243.5 19V24 M250.5 19V24 M257.5 7V24 M264.5 19V24 M271.5 19V24 M278.5 19V24 M285.5 19V24 M292.5 15V24 M299.5 19V24 M306.5 19V24 M313.5 19V24 M320.5 19V24 M327.5 7V24 M334.5 19V24 M341.5 19V24 M348.5 19V24 M355.5 19V24 M362.5 15V24 M369.5 19V24 M376.5 19V24 M383.5 19V24 M389.5 19V24 M396.5 7V24 M403.5 19V24 M410.5 19V24 M417.5 19V24 M424.5 19V24 M431.5 15V24 M438.5 19V24 M445.5 19V24 M452.5 19V24 M459.5 19V24 M466.5 7V24 M473.5 19V24 M480.5 19V24 M487.5 19V24 M494.5 19V24 M501.5 15V24 M508.5 19V24 M515.5 19V24 M522.5 19V24 M529.5 19V24 M536.5 7V24 M543.5 19V24 M550.5 19V24 M557.5 19V24 M564.5 19V24 M571.5 15V24 M578.5 19V24 M584.5 19V24 M591.5 19V24 M598.5 19V24 M605.5 7V24 M612.5 19V24 M619.5 19V24 M626.5 19V24 M633.5 19V24 M640.5 15V24 M647.5 19V24 M654.5 19V24 M661.5 19V24 M668.5 19V24 M675.5 7V24 M682.5 19V24 M689.5 19V24 M696.5 19V24 M703.5 19V24 M710.5 15V24 M717.5 19V24 M724.5 19V24 M731.5 19V24 M738.5 19V24 M745.5 7V24 M752.5 19V24 M759.5 19V24 M766.5 19V24 M773.5 19V24 M779.5 15V24 M786.5 19V24 M793.5 19V24 M800.5 19V24 M807.5 19V24 M814.5 7V24 M821.5 19V24 M828.5 19V24 M835.5 19V24 M842.5 19V24 M849.5 15V24 M856.5 19V24 M863.5 19V24 M870.5 19V24 M877.5 19V24 M884.5 7V24 M891.5 19V24 M898.5 19V24 M905.5 19V24 M912.5 19V24 M919.5 15V24 M926.5 19V24 M933.5 19V24 M940.5 19V24 M947.5 19V24 M954.5 7V24 M961.5 19V24 M967.5 19V24 M974.5 19V24 M981.5 19V24 M988.5 15V24 M995.5 19V24 M1002.5 19V24 M1009.5 19V24 M1016.5 19V24 M1023.5 7V24 M1030.5 19V24 M1037.5 19V24 M1044.5 19V24 M1051.5 19V24 M1058.5 15V24 M1065.5 19V24 M1072.5 19V24 M1079.5 19V24 M1086.5 19V24 M1093.5 7V24 M1100.5 19V24 M1107.5 19V24 M1114.5 19V24 M1121.5 19V24 M1128.5 15V24 M1135.5 19V24 M1142.5 19V24 M1149.5 19V24 M1156.5 19V24 M1162.5 7V24 M1169.5 19V24 M1176.5 19V24 M1183.5 19V24 M1190.5 19V24 M1197.5 15V24 M1204.5 19V24 M1211.5 19V24 M1218.5 19V24 M1225.5 19V24 M1232.5 7V24 M1239.5 19V24 M1246.5 19V24 M1253.5 19V24 M1260.5 19V24 M1267.5 15V24 M1274.5 19V24 M1281.5 19V24 M1288.5 19V24" stroke="#e0e0e0" stroke-width="1" fill="none"/><text x="121.5" y="17" font-family="Liberation Sans" font-size="12" fill="#e6e6e6">-100</text><text x="191.5" y="17" font-family="Liberation Sans" font-size="12" fill="#e6e6e6">-75</text><text x="260.5" y="17" font-family="Liberation Sans" font-size="12" fill="#e6e6e6">-50</text><text x="330.5" y="17" font-family="Liberation Sans" font-size="12" fill="#e6e6e6">-25</text><text x="399.5" y="17" font-family="Liberation Sans" font-size="12" fill="#e6e6e6">0</text><text x="469.5" y="17" font-family="Liberation Sans" font-size="12" fill="#e6e6e6">25</text><text x="539.5" y="17" font-family="Liberation Sans" font-size="12" fill="#e6e6e6">50</text><text x="608.5" y="17" font-family="Liberation Sans" font-size="12" fill="#e6e6e6">75</text><text x="678.5" y="17" font-family="Liberation Sans" font-size="12" fill="#e6e6e6">100</text><text x="748.5" y="17" font-family="Liberation Sans" font-size="12" fill="#e6e6e6">125</text><text x="817.5" y="17" font-family="Liberation Sans" font-size="12" fill="#e6e6e6">150</text><text x="887.5" y="17" font-family="Liberation Sans" font-size="12" fill="#e6e6e6">175</text><text x="957.5" y="17" font-family="Liberation Sans" font-size="12" fill="#e6e6e6">200</text><text x="1026.5" y="17" font-family="Liberation Sans" font-size="12" fill="#e6e6e6">225</text><text x="1096.5" y="17" font-family="Liberation Sans" font-size="12" fill="#e6e6e6">250</text><text x="1165.5" y="17" font-family="Liberation Sans" font-size="12" fill="#e6e6e6">275</text><text x="1235.5" y="17" font-family="Liberation Sans" font-size="12" fill="#e6e6e6">300</text></svg>
<svg class="a" style="left:33px;top:0" width="25" height="866"><path d="M19 98.5H24 M19 105.5H24 M15 112.5H24 M19 119.5H24 M19 126.5H24 M19 133.5H24 M19 140.5H24 M7 147.5H24 M19 154.5H24 M19 161.5H24 M19 168.5H24 M19 175.5H24 M15 182.5H24 M19 189.5H24 M19 196.5H24 M19 203.5H24 M19 210.5H24 M7 217.5H24 M19 224.5H24 M19 231.5H24 M19 238.5H24 M19 245.5H24 M15 252.5H24 M19 259.5H24 M19 266.5H24 M19 272.5H24 M19 279.5H24 M7 286.5H24 M19 293.5H24 M19 300.5H24 M19 307.5H24 M19 314.5H24 M15 321.5H24 M19 328.5H24 M19 335.5H24 M19 342.5H24 M19 349.5H24 M7 356.5H24 M19 363.5H24 M19 370.5H24 M19 377.5H24 M19 384.5H24 M15 391.5H24 M19 398.5H24 M19 405.5H24 M19 412.5H24 M19 419.5H24 M7 426.5H24 M19 433.5H24 M19 440.5H24 M19 447.5H24 M19 454.5H24 M15 461.5H24 M19 468.5H24 M19 475.5H24 M19 481.5H24 M19 488.5H24 M7 495.5H24 M19 502.5H24 M19 509.5H24 M19 516.5H24 M19 523.5H24 M15 530.5H24 M19 537.5H24 M19 544.5H24 M19 551.5H24 M19 558.5H24 M7 565.5H24 M19 572.5H24 M19 579.5H24 M19 586.5H24 M19 593.5H24 M15 600.5H24 M19 607.5H24 M19 614.5H24 M19 621.5H24 M19 628.5H24 M7 635.5H24 M19 642.5H24 M19 649.5H24 M19 656.5H24 M19 663.5H24 M15 670.5H24 M19 677.5H24 M19 684.5H24 M19 690.5H24 M19 697.5H24 M7 704.5H24 M19 711.5H24 M19 718.5H24 M19 725.5H24 M19 732.5H24 M15 739.5H24 M19 746.5H24 M19 753.5H24 M19 760.5H24 M19 767.5H24 M7 774.5H24 M19 781.5H24 M19 788.5H24 M19 795.5H24 M19 802.5H24 M15 809.5H24 M19 816.5H24 M19 823.5H24 M19 830.5H24 M19 837.5H24 M7 844.5H24 M19 851.5H24 M19 858.5H24 M19 865.5H24" stroke="#e0e0e0" stroke-width="1" fill="none"/><text transform="translate(16.8 164) rotate(-90)" font-family="Liberation Sans" font-size="12" fill="#e6e6e6">25</text><text transform="translate(16.8 234) rotate(-90)" font-family="Liberation Sans" font-size="12" fill="#e6e6e6">50</text><text transform="translate(16.8 303) rotate(-90)" font-family="Liberation Sans" font-size="12" fill="#e6e6e6">75</text><text transform="translate(16.8 377.5) rotate(-90)" font-family="Liberation Sans" font-size="12" fill="#e6e6e6">100</text><text transform="translate(16.8 447.5) rotate(-90)" font-family="Liberation Sans" font-size="12" fill="#e6e6e6">125</text><text transform="translate(16.8 516.5) rotate(-90)" font-family="Liberation Sans" font-size="12" fill="#e6e6e6">150</text><text transform="translate(16.8 586.5) rotate(-90)" font-family="Liberation Sans" font-size="12" fill="#e6e6e6">175</text><text transform="translate(16.8 656.5) rotate(-90)" font-family="Liberation Sans" font-size="12" fill="#e6e6e6">200</text><text transform="translate(16.8 725.5) rotate(-90)" font-family="Liberation Sans" font-size="12" fill="#e6e6e6">225</text><text transform="translate(16.8 795.5) rotate(-90)" font-family="Liberation Sans" font-size="12" fill="#e6e6e6">250</text><text transform="translate(16.8 865.5) rotate(-90)" font-family="Liberation Sans" font-size="12" fill="#e6e6e6">275</text></svg>
<div class="a" style="left:0;top:68px;width:30px;height:798px;background:#363636"></div>
<div class="a" style="left:30px;top:68px;width:1px;height:798px;background:#272727"></div>
<div class="a" style="left:-1px;top:68px;width:30px;height:32px;background:#2a2a2a;border:1px solid #242424;border-radius:0 6px 6px 0"></div>
<div class="a" style="left:33px;top:68px;width:25px;height:25px;background:#393939;border:1px solid #282828;border-radius:5px"></div>
<svg class="a" style="left:0;top:0" width="31" height="866"><path d="M0 164.5H30" stroke="#2e2e2e" stroke-width="1"/><path d="M0 324.5H30" stroke="#2e2e2e" stroke-width="1"/><path d="M0 454.5H30" stroke="#2e2e2e" stroke-width="1"/><path d="M0 582.5H30" stroke="#2e2e2e" stroke-width="1"/><path d="M0 712.5H30" stroke="#2e2e2e" stroke-width="1"/><g transform="translate(6.5 76.8)"><path d="M2.3 1.4L13.6 7.6L9.3 9.2L11.2 13.3L8.9 14.7L6.8 10.6L2.9 13.6Z" fill="#2a2a2a" stroke="#ececec" stroke-width="1.8" stroke-linejoin="round"/></g><g transform="translate(6.5 107.7)"><rect x="2" y="1.3" width="5.4" height="5.4" fill="none" stroke="#ececec" stroke-width="1.6"/><path d="M0.3 13.5Q0.6 9.5 2 7M7.5 2.2Q10 1 13.5 1" fill="none" stroke="#ececec" stroke-width="0.9"/><path d="M9.3 9.5L14.3 12L9.7 14.6Z" fill="#ececec"/></g><g transform="translate(6.5 140.5)"><circle cx="5" cy="5.3" r="4.1" fill="none" stroke="#ececec" stroke-width="1.4"/><rect x="5.8" y="6.2" width="8" height="8" fill="none" stroke="#ececec" stroke-width="1.4"/></g><g transform="translate(6.5 172.8)"><rect x="1.2" y="1.2" width="13.6" height="13.6" fill="#ff1493" stroke="#ececec" stroke-width="1.3"/></g><g transform="translate(6.5 205.0)"><circle cx="8" cy="8" r="6.8" fill="#a51a6b" stroke="#ececec" stroke-width="1.3"/></g><g transform="translate(6.5 236.9)"><path d="M5.5 1L10.5 3.8L9.2 9.5L3 10L0.8 4.8Z" fill="#a51a6b" stroke="#ececec" stroke-width="1.1" stroke-linejoin="round"/><path d="M11 5.2L12.3 8.2L15.5 8.3L13 10.5L14 13.8L11 12L8.2 13.8L9 10.5L6.5 8.3L9.8 8.2Z" fill="#6a1f4b" stroke="#ececec" stroke-width="1.1" stroke-linejoin="round"/></g><g transform="translate(6.5 268.8)"><path d="M8 0.8L14.5 4.3V11.7L8 15.2L1.5 11.7V4.3Z" fill="#ececec"/><path d="M8 2.6L12.5 5L8 7.4L3.5 5Z" fill="#6a1f4b"/><path d="M3 6.3L7.3 8.6V13.4L3 11Z" fill="#ff1493"/><path d="M13 6.3L8.7 8.6V13.4L13 11Z" fill="#a51a6b"/></g><g transform="translate(6.5 302.0)"><path d="M6.59 8.25 L6.48 8.36 L6.33 8.45 L6.17 8.52 L5.99 8.56 L5.79 8.57 L5.58 8.54 L5.37 8.48 L5.16 8.38 L4.97 8.24 L4.79 8.06 L4.63 7.85 L4.51 7.60 L4.43 7.33 L4.38 7.04 L4.39 6.73 L4.44 6.42 L4.55 6.11 L4.71 5.81 L4.92 5.53 L5.17 5.28 L5.48 5.07 L5.82 4.90 L6.19 4.78 L6.59 4.72 L7.01 4.72 L7.43 4.78 L7.84 4.92 L8.24 5.12 L8.62 5.38 L8.96 5.71 L9.25 6.09 L9.48 6.52 L9.65 7.00 L9.75 7.50 L9.77 8.03 L9.71 8.56 L9.56 9.09 L9.34 9.60 L9.03 10.08 L8.65 10.51 L8.19 10.89 L7.68 11.21 L7.11 11.44 L6.51 11.59 L5.87 11.65 L5.23 11.62 L4.58 11.48 L3.96 11.24 L3.36 10.91 L2.82 10.48 L2.34 9.97 L1.93 9.38 L1.61 8.73 L1.39 8.03 L1.28 7.29 L1.27 6.53 L1.39 5.77 L1.62 5.02 L1.96 4.31 L2.42 3.65 L2.97 3.05 L3.62 2.54 L4.34 2.13 L5.13 1.82 L5.97 1.63 L6.84 1.58 L7.72 1.65 L8.59 1.85 L9.42 2.19 L10.21 2.65 L10.93 3.24 L11.56 3.93 L12.08 4.72 L12.49 5.59 L12.77 6.52 L12.90 7.49 L12.89 8.48 L12.72 9.47 L12.41 10.44 L11.95 11.36" fill="none" stroke="#ececec" stroke-width="2"/></g><g transform="translate(6.5 333.9)"><circle cx="2.2" cy="1.8" r="1.6" fill="#1fa01f"/><rect x="0.5" y="9" width="3.6" height="3.6" fill="#1fa01f"/><path d="M2.2 2V9" stroke="#1fa01f" stroke-width="1"/><path d="M4 7.3Q7.5 2.5 12.5 2" fill="none" stroke="#ececec" stroke-width="0.9"/><path d="M11.3 5.3L14.8 8.2L9.5 15L5 15.5L5.8 11Z" fill="none" stroke="#ececec" stroke-width="1.5" stroke-linejoin="round"/><circle cx="9.5" cy="10.5" r="1" fill="#ececec"/></g><g transform="translate(6.5 365.7)"><path d="M3 1.5Q0.5 3 3 4.7Q5.5 6.2 2.5 7.2Q0.5 8 2.5 10" fill="none" stroke="#1fa01f" stroke-width="1.3"/><path d="M12.5 3L15.2 5.7L7.8 13.2L5 10.5Z" fill="#ececec"/><path d="M4.5 11.2L7.2 13.8L3 15Z" fill="#1fa01f"/></g><g transform="translate(6.5 397.6)"><path d="M3.5 2.5Q6.5 3 4.5 5.5Q2.5 7.5 3 9" fill="none" stroke="#1fa01f" stroke-width="1.2"/><path d="M14.8 2.5L8.5 10L6.6 8.5Z" fill="#ececec"/><path d="M6.2 9L8 10.6Q7 14 1.5 15.3Q3.5 11 6.2 9Z" fill="#1fa01f"/></g><g transform="translate(6.5 429.5)"><path d="M0.5 14L5.3 2.5H8L12.8 14H10.2L9.1 11.2H4.2L3.1 14ZM5 9H8.3L6.65 4.9Z" fill="#ececec" stroke="#ececec" stroke-width="0.5"/><rect x="14" y="1" width="1.6" height="15" fill="#1fa01f"/></g><g transform="translate(6.5 463.2)"><defs><linearGradient id="tg" x1="0" y1="0" x2="1" y2="1"><stop offset="0" stop-color="#1a78d4"/><stop offset="0.55" stop-color="#5fb0f0"/><stop offset="1" stop-color="#f2f8ff"/></linearGradient></defs><rect x="0.8" y="0.8" width="14.4" height="14.4" rx="1" fill="#222" stroke="#ececec" stroke-width="1.5"/><rect x="2.5" y="2.5" width="11" height="11" fill="url(#tg)"/></g><g transform="translate(6.5 495.1)"><defs><radialGradient id="mg"><stop offset="0" stop-color="#8fd0ff"/><stop offset="0.35" stop-color="#1f86e0"/><stop offset="1" stop-color="#101820"/></radialGradient></defs><rect x="0.8" y="0.8" width="14.4" height="14.4" fill="url(#mg)" stroke="#ececec" stroke-width="1.5"/><path d="M8 8Q8 2.5 1.5 2.5M8 8Q13.5 8 13.5 1.5M8 8Q8 13.5 14.5 13.5M8 8Q2.5 8 2.5 14.5" fill="none" stroke="#f0f0f0" stroke-width="1.1"/></g><g transform="translate(6.5 527.0)"><path d="M3 1.5Q0.8 4.5 1.2 5.8A1.9 1.9 0 0 0 4.8 5.8Q5.2 4.5 3 1.5Z" fill="#1f8ae6"/><path d="M12.5 2.3L14.2 4L12.5 5.7L13.5 6.7L12.6 7.6L8.8 3.8L9.7 2.9L10.7 3.9Z" fill="#ececec"/><path d="M9.4 5.6L10.9 7.1L5 13L2.6 14L3.5 11.5Z" fill="none" stroke="#ececec" stroke-width="1.2" stroke-linejoin="round"/></g><g transform="translate(6.5 558.9)"><path d="M9.5 1.2L15.2 7L10.5 13.2L4.5 8.8Z" fill="none" stroke="#ececec" stroke-width="1.5" stroke-linejoin="round"/><path d="M6 8.2L14.2 7.4L10.4 12.6Z" fill="#ececec"/><path d="M3 9Q0.5 12.5 1 13.8A2 2 0 0 0 5 13.8Q5.5 12.5 3 9Z" fill="#1f8ae6"/></g><g transform="translate(6.5 592.0)"><path d="M1 14.5V10Q3 5.5 7.5 4Q11.5 3 13 6Q10.2 5.5 9.8 8.3Q10 11 14.5 10.5V14.5Z" fill="#ececec"/></g><g transform="translate(6.5 624.0)"><rect x="7" y="7" width="8" height="8.5" rx="1" fill="#ececec"/><rect x="8.8" y="4" width="4.5" height="2.4" fill="#ececec"/><path d="M1 2H2M3 1H4M1 4H2M3.5 3.2H4.5M5 2H6M2 5.8H3M4.5 5H5.5" stroke="#ececec" stroke-width="1"/></g><g transform="translate(6.5 655.8)"><path d="M10.5 1.5L15 6L9.5 11.5L5 7Z" fill="#ececec"/><path d="M4.3 7.8L8.8 12.2L7 13.9H4L2 12Z" fill="#9a9a9a"/><path d="M1 15.3H5M7 15.3H15" stroke="#ececec" stroke-width="1.3"/></g><g transform="translate(6.5 688.0)"><path d="M1 3.5H4.5Q6.5 3.5 7.5 6L9 9.5Q9.7 11 11.2 11" fill="none" stroke="#ececec" stroke-width="1.8"/><path d="M10.5 7.3L15 11L10.5 14.7Z" fill="#ececec"/></g><g transform="translate(6.5 720.9)"><path d="M2.5 1H10.5L13.5 4V15H2.5Z" fill="#ececec"/><path d="M9 4.5H11M9.5 7H11M9 9.5H11M9.5 12H11" stroke="#333" stroke-width="1"/></g><g transform="translate(6.5 753.7)"><circle cx="7" cy="7" r="5.2" fill="none" stroke="#ececec" stroke-width="1.7"/><path d="M10.8 10.8L14.8 14.8" stroke="#ececec" stroke-width="2.2"/></g><g transform="translate(6.5 785.4)"><path d="M5.5 1.5H11.5L14.5 4.5V12.5H12.5" fill="none" stroke="#ececec" stroke-width="1.5"/><path d="M1.5 5H8L11 8V15.3H1.5Z" fill="none" stroke="#ececec" stroke-width="1.6" stroke-linejoin="round"/></g></svg>
<svg class="a" style="left:0;top:0" width="1291" height="866"><rect x="40" y="79.6" width="10.2" height="7.6" rx="0.6" fill="#e8e8e8"/><path d="M42 80V76.5A3.1 3.1 0 0 1 48.2 76.5V80" fill="none" stroke="#e8e8e8" stroke-width="1.7"/><path d="M526 88.2H535.5L530.7 92.3Z" fill="#ececec"/><path d="M52.4 259.2V266.8L57.2 263Z" fill="#ececec"/></svg>
</body></html>
